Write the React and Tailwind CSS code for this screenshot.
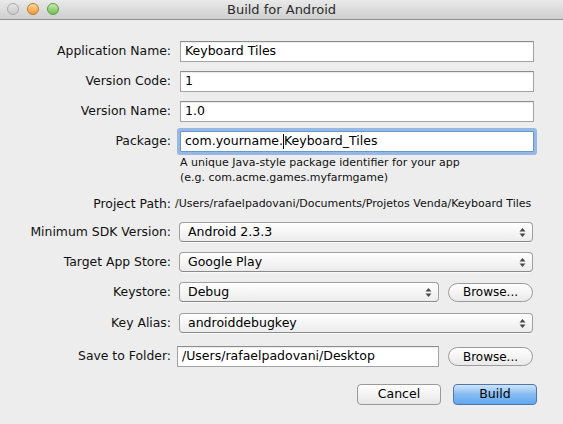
import React from 'react';

const font = { fontFamily: '"DejaVu Sans", "Liberation Sans", sans-serif' };

const Label = ({ children }) => (
  <div className="w-[172px] shrink-0 text-right pr-[1px] text-[12.4px] text-[#111] whitespace-nowrap">{children}</div>
);

const TextField = ({ value, width = 'w-[354px]', ml = 'ml-[8px]', focused = false, caretAfter }) => (
  <div
    className={`${width} ${ml} h-[21px] bg-white flex items-center px-[4px] text-[12.5px] text-black whitespace-nowrap overflow-hidden ${
      focused
        ? 'border border-[#6c95c9] shadow-[0_0_0_3px_rgba(120,165,225,0.75)] rounded-[1px]'
        : 'border border-[#a3a3a3] border-t-[#8c8c8c] shadow-[inset_0_1px_1px_rgba(0,0,0,0.08)]'
    }`}
  >
    {caretAfter ? (
      <>
        <span>{caretAfter}</span>
        <span className="inline-block w-[1px] h-[15px] bg-black" />
        <span>{value}</span>
      </>
    ) : (
      value
    )}
  </div>
);

const Arrows = () => (
  <svg width="7" height="11" viewBox="0 0 7 11" className="shrink-0">
    <path d="M3.5 1 L6.5 4.5 L0.5 4.5 Z" fill="#4a4a4a" />
    <path d="M3.5 10 L6.5 6.5 L0.5 6.5 Z" fill="#4a4a4a" />
  </svg>
);

const Select = ({ value, width = 'w-[354px]' }) => (
  <div
    className={`${width} ml-[7px] h-[20px] rounded-[4px] border border-[#a0a0a0] border-b-[#8a8a8a] bg-gradient-to-b from-white to-[#ececec] shadow-[0_1px_0_rgba(255,255,255,0.6)] flex items-center justify-between pl-[8px] pr-[6px] text-[12.5px] text-black`}
  >
    <span>{value}</span>
    <Arrows />
  </div>
);

const PillButton = ({ children }) => (
  <div className="ml-[9px] w-[85px] h-[19px] rounded-full border border-[#9c9c9c] bg-gradient-to-b from-white to-[#e9e9e9] flex items-center justify-center text-[12px] text-black">
    {children}
  </div>
);

export default function App() {
  return (
    <div className="w-[563px] h-[424px] bg-[#ededed] overflow-hidden" style={font}>
      {/* title bar */}
      <div className="relative h-[20px] bg-gradient-to-b from-[#e9e9e9] to-[#cfcfcf] border-b border-[#8f8f8f] flex items-center justify-center">
        <div className="absolute left-[7px] top-[3px] flex gap-[8px]">
          <div className="w-[12px] h-[12px] rounded-full border border-[#a8a8a8] bg-gradient-to-b from-[#e6e6e6] to-[#c8c8c8]" />
          <div className="w-[12px] h-[12px] rounded-full border border-[#b9782a] bg-gradient-to-b from-[#fcd79a] to-[#ef9a2e]" />
          <div className="w-[12px] h-[12px] rounded-full border border-[#5b9d45] bg-gradient-to-b from-[#c6eab0] to-[#6dc04b]" />
        </div>
        <span className="text-[13px] text-[#2b2b2b]">Build for Android</span>
      </div>

      <div className="flex flex-col">
        <div className="flex items-center mt-[21px]">
          <Label>Application Name:</Label>
          <TextField value="Keyboard Tiles" />
        </div>
        <div className="flex items-center mt-[9px]">
          <Label>Version Code:</Label>
          <TextField value="1" />
        </div>
        <div className="flex items-center mt-[9px]">
          <Label>Version Name:</Label>
          <TextField value="1.0" />
        </div>
        <div className="flex items-center mt-[9px]">
          <Label>Package:</Label>
          <TextField value="Keyboard_Tiles" caretAfter="com.yourname." focused />
        </div>
        <div className="ml-[180px] mt-[3px] text-[11px] leading-[15px] text-[#111]">
          <div>A unique Java-style package identifier for your app</div>
          <div>(e.g. com.acme.games.myfarmgame)</div>
        </div>
        <div className="flex items-center mt-[11px] h-[16px]">
          <Label>Project Path:</Label>
          <div className="ml-[3px] text-[11px] text-[#111] whitespace-nowrap">
            /Users/rafaelpadovani/Documents/Projetos Venda/Keyboard Tiles
          </div>
        </div>
        <div className="flex items-center mt-[10px]">
          <Label>Minimum SDK Version:</Label>
          <Select value="Android 2.3.3" />
        </div>
        <div className="flex items-center mt-[10px]">
          <Label>Target App Store:</Label>
          <Select value="Google Play" />
        </div>
        <div className="flex items-center mt-[10px]">
          <Label>Keystore:</Label>
          <Select value="Debug" width="w-[260px]" />
          <PillButton>Browse...</PillButton>
        </div>
        <div className="flex items-center mt-[11px]">
          <Label>Key Alias:</Label>
          <Select value="androiddebugkey" />
        </div>
        <div className="flex items-center mt-[13px]">
          <Label>Save to Folder:</Label>
          <TextField value="/Users/rafaelpadovani/Desktop" width="w-[262px]" ml="ml-[5px]" />
          <PillButton>Browse...</PillButton>
        </div>
        <div className="flex justify-end mt-[17px] pr-[26px] gap-[12px]">
          <div className="w-[84px] h-[21px] rounded-[4px] border border-[#9a9a9a] bg-gradient-to-b from-white to-[#e6e6e6] flex items-center justify-center text-[12.5px] text-black">
            Cancel
          </div>
          <div className="w-[84px] h-[21px] rounded-[4px] border border-[#4f77a8] bg-gradient-to-b from-[#cfe4fb] via-[#86bbf1] to-[#5fa8f0] flex items-center justify-center text-[12.5px] text-black">
            Build
          </div>
        </div>
      </div>
    </div>
  );
}
